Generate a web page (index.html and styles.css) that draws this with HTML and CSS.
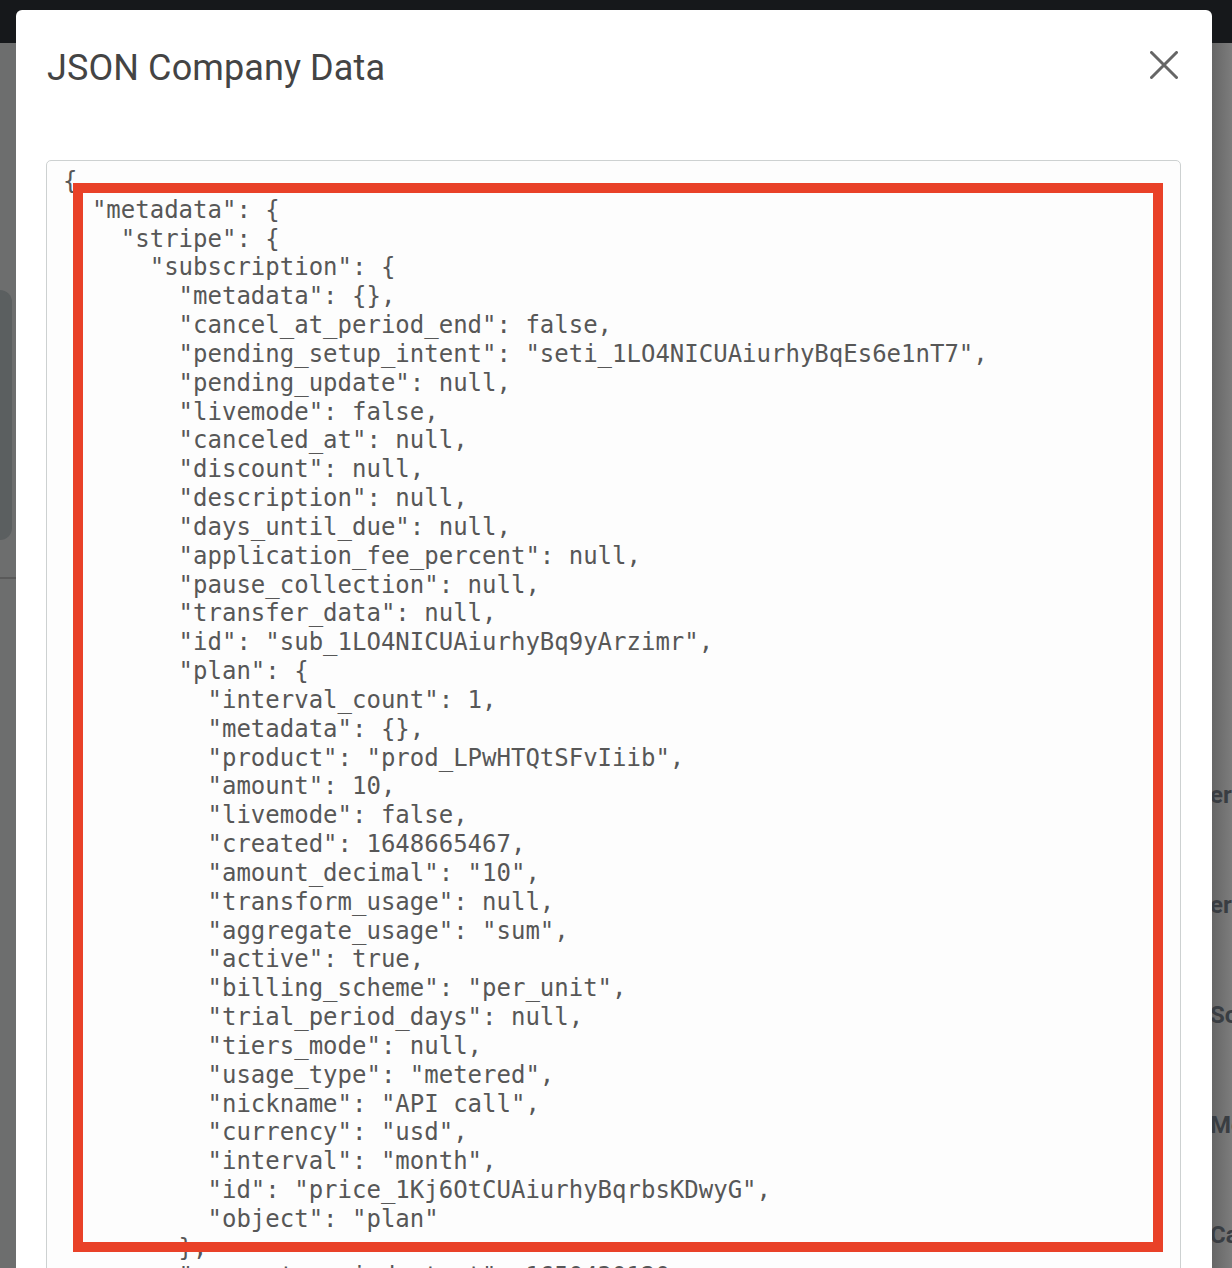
FILE: index.html
```
<!DOCTYPE html>
<html lang="en">
<head>
<meta charset="utf-8">
<title>JSON Company Data</title>
<link rel="stylesheet" href="styles.css">
</head>
<body>
<div class="page">
  <div class="topbar"></div>
  <div class="content">
    <div class="side-left">
      <div class="side-card"></div>
      <div class="side-rule"></div>
    </div>
    <div class="main"></div>
    <div class="side-right">
      <span class="ghost">er</span>
      <span class="ghost">er</span>
      <span class="ghost">So</span>
      <span class="ghost">Me</span>
      <span class="ghost">Ca</span>
    </div>
  </div>
</div>

<div class="modal">
  <div class="modal-header">
    <h1 class="modal-title">JSON Company Data</h1>
    <button class="close" aria-label="Close">
      <svg width="28" height="28" viewBox="0 0 28 28"><path d="M1.5 1.5 L26.5 26.5 M26.5 1.5 L1.5 26.5" stroke="#666" stroke-width="3" stroke-linecap="round" fill="none"/></svg>
    </button>
  </div>
  <div class="modal-body">
    <div class="code-box">
<pre class="code">{
  "metadata": {
    "stripe": {
      "subscription": {
        "metadata": {},
        "cancel_at_period_end": false,
        "pending_setup_intent": "seti_1LO4NICUAiurhyBqEs6e1nT7",
        "pending_update": null,
        "livemode": false,
        "canceled_at": null,
        "discount": null,
        "description": null,
        "days_until_due": null,
        "application_fee_percent": null,
        "pause_collection": null,
        "transfer_data": null,
        "id": "sub_1LO4NICUAiurhyBq9yArzimr",
        "plan": {
          "interval_count": 1,
          "metadata": {},
          "product": "prod_LPwHTQtSFvIiib",
          "amount": 10,
          "livemode": false,
          "created": 1648665467,
          "amount_decimal": "10",
          "transform_usage": null,
          "aggregate_usage": "sum",
          "active": true,
          "billing_scheme": "per_unit",
          "trial_period_days": null,
          "tiers_mode": null,
          "usage_type": "metered",
          "nickname": "API call",
          "currency": "usd",
          "interval": "month",
          "id": "price_1Kj6OtCUAiurhyBqrbsKDwyG",
          "object": "plan"
        },
        "current_period_start": 1650430120,
        "current_period_end": 1653022120,
        "status": "active"
      }
    }
  }
}</pre>
      <div class="highlight"></div>
    </div>
  </div>
</div>
</body>
</html>
```

FILE: styles.css
```
* { box-sizing: border-box; }

html, body {
  margin: 0;
  padding: 0;
  height: 1268px;
  overflow: hidden;
}

body {
  background: #6f6f6f;
  font-family: Roboto, "Liberation Sans", sans-serif;
}

.page {
  display: flex;
  flex-direction: column;
  height: 1268px;
}

.topbar {
  height: 43px;
  background: #16181b;
  flex: none;
}

.content {
  flex: 1;
  display: flex;
}

.side-left {
  width: 16px;
  background: #6d6e6e;
  display: flex;
  flex-direction: column;
  padding-top: 247px;
}

.side-card {
  width: 12px;
  height: 250px;
  background: #5b5f60;
  border-radius: 0 12px 12px 0;
}

.side-rule {
  margin-top: 37px;
  height: 2px;
  background: #5a5a5a;
}

.main { flex: 1; }

.side-right {
  width: 20px;
  background: linear-gradient(90deg, #666, #7c7c7c);
  overflow: hidden;
  display: flex;
  flex-direction: column;
  padding-top: 740px;
  gap: 86px;
}

.ghost {
  display: block;
  margin-left: -2px;
  font: 700 24px/24px Roboto, "Liberation Sans", sans-serif;
  color: #393d42;
  white-space: nowrap;
}

.modal {
  position: fixed;
  left: 16px;
  top: 10px;
  width: 1196px;
  height: 1300px;
  background: #fff;
  border-radius: 6px 6px 0 0;
  display: flex;
  flex-direction: column;
}

.modal-header {
  display: flex;
  justify-content: space-between;
  align-items: flex-start;
  padding: 37px 34px 0 31px;
}

.modal-title {
  margin: 0;
  font: 400 36px/42px Roboto, "Liberation Sans", sans-serif;
  letter-spacing: 0.1px;
  color: #444;
}

.close {
  border: 0;
  background: none;
  padding: 0;
  margin-top: 4px;
  width: 28px;
  height: 28px;
  cursor: pointer;
}

.close svg { display: block; }

.modal-body {
  padding: 71px 31px 0 30px;
}

.code-box {
  position: relative;
  border: 1px solid #cdd1d1;
  border-radius: 5px;
  background: #fdfdfd;
  padding: 6px 16px;
}

.code {
  margin: 0;
  font: 400 24px/28.83px "DejaVu Sans Mono", monospace;
  color: #575757;
}

.highlight {
  position: absolute;
  left: 26px;
  top: 22px;
  width: 1090px;
  height: 1069px;
  border: 10px solid #e94128;
  pointer-events: none;
}
```
